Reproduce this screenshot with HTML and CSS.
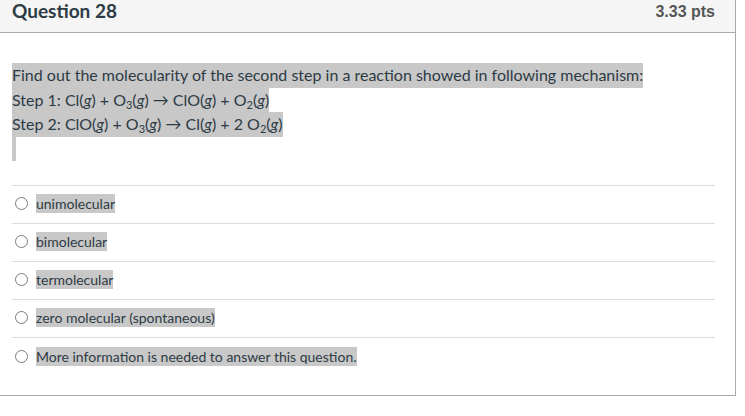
FILE: index.html
```
<!DOCTYPE html>
<html>
<head>
<meta charset="utf-8">
<link rel="stylesheet" href="styles.css">
</head>
<body>
<div class="card">
  <div class="header">
    <span class="title">Question 28</span>
    <span class="pts">3.33 pts</span>
  </div>
  <div class="body">
    <div class="qtext">
      <div class="line"><span class="hl">Find out the molecularity of the second step in a reaction showed in following mechanism:</span></div>
      <div class="line"><span class="hl">Step 1: Cl(<i class="g">g</i>) + O<sub>3</sub>(<i class="g">g</i>) → ClO(<i class="g">g</i>) + O<sub>2</sub>(<i class="g">g</i>)</span></div>
      <div class="line"><span class="hl">Step 2: ClO(<i class="g">g</i>) + O<sub>3</sub>(<i class="g">g</i>) → Cl(<i class="g">g</i>) + 2 O<sub>2</sub>(<i class="g">g</i>)</span></div>
      <div class="line"><span class="hl empty"></span></div>
    </div>
    <div class="answers">
      <div class="answer"><span class="radio"></span><span class="alabel">unimolecular</span></div>
      <div class="answer"><span class="radio"></span><span class="alabel">bimolecular</span></div>
      <div class="answer"><span class="radio"></span><span class="alabel">termolecular</span></div>
      <div class="answer"><span class="radio"></span><span class="alabel">zero molecular (spontaneous)</span></div>
      <div class="answer"><span class="radio"></span><span class="alabel">More information is needed to answer this question.</span></div>
    </div>
  </div>
</div>
</body>
</html>
```
FILE: styles.css
```
html, body {
  margin: 0;
  padding: 0;
  background: #ffffff;
}
body {
  font-family: Lato, "Liberation Sans", sans-serif;
  color: #2d3b45;
}
.card {
  width: 736px;
  border-right: 1px solid #a9a9a9;
  border-bottom: 1px solid #a9a9a9;
  box-sizing: border-box;
}
.header {
  display: flex;
  justify-content: space-between;
  align-items: flex-start;
  background: #f5f5f5;
  border-bottom: 1px solid #a9a9a9;
  height: 33px;
  box-sizing: border-box;
  padding: 0 20px 0 12px;
}
.title {
  font-weight: 700;
  font-size: 19px;
  line-height: 22px;
  color: #2d3b45;
}
.pts {
  font-family: "Liberation Sans", Arial, sans-serif;
  font-weight: 700;
  font-size: 16px;
  line-height: 24px;
  color: #555555;
}
.body {
  padding: 30px 20px 20px 12px;
}
.qtext {
  font-size: 16px;
  color: #2d3b45;
}
.line {
  height: 24.5px;
}
.hl {
  display: inline-block;
  background: #c8c8c8;
  line-height: 24px;
  height: 24.5px;
  vertical-align: top;
}
.hl.empty {
  width: 4px;
}
.g {
  font-style: italic;
}
sub {
  font-size: 11px;
  line-height: 0;
  vertical-align: -3px;
}
.answers {
  margin-top: 24px;
}
.answer {
  display: flex;
  align-items: center;
  border-top: 1px solid #dcdcdc;
  height: 38px;
  box-sizing: border-box;
  padding: 0 0 3px 3px;
}
.answer:last-child {
  padding-bottom: 1px;
}
.radio {
  width: 13px;
  height: 13px;
  border: 1px solid #7a7a7a;
  border-radius: 50%;
  box-sizing: border-box;
  margin-right: 8px;
  flex: none;
}
.alabel {
  font-size: 14px;
  line-height: 19px;
  background: #c8c8c8;
  color: #2d3b45;
}
```
